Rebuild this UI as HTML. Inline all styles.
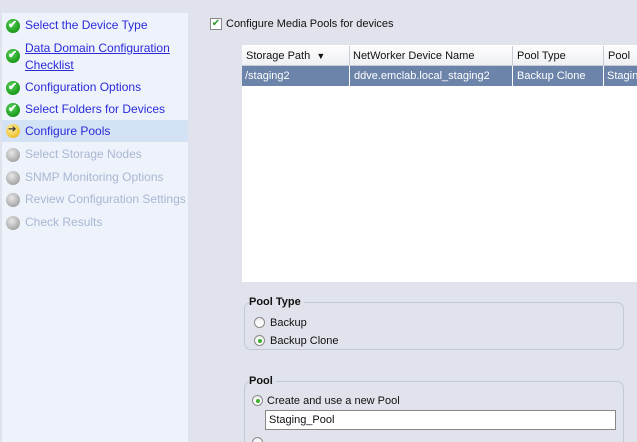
<!DOCTYPE html>
<html><head><meta charset="utf-8"><style>
*{margin:0;padding:0;box-sizing:border-box}
html,body{width:637px;height:442px;overflow:hidden}
body{background:#e0e3eb;font-family:"Liberation Sans",Arial,sans-serif;position:relative}
.left{position:absolute;left:2px;top:13px;width:186px;height:429px;background:#eef3fb}
.step{position:absolute;left:0;width:186px;font-size:12px;color:#2a2ad8;padding-left:23px;line-height:17px;white-space:nowrap}
.step.dis{color:#a9b7d3}
.step.cur{background:#d4e2f5}
.ic{position:absolute;left:4px;width:14px;height:14px;border-radius:50%}
.ok{background:radial-gradient(circle at 40% 35%,#5ad25a,#1a9a1a 70%,#0d6d0d);}
.ok:after{content:"✔";position:absolute;left:2px;top:-2px;color:#fff;font-size:11px;font-weight:bold}
.cu{background:radial-gradient(circle at 40% 35%,#fff3a0,#f0c030 70%,#b88a10);}
.cu:after{content:"➔";position:absolute;left:2px;top:-1px;color:#333;font-size:10px;line-height:14px}
.gr{background:radial-gradient(circle at 40% 35%,#e8e8e8,#a8a8a8 70%,#777);}
.t{position:absolute;font-size:11px;color:#111;white-space:nowrap}
.tbl{position:absolute;left:242px;top:45px;width:395px;height:237px;background:#fff}
.hd{position:absolute;top:1px;height:20px;background:linear-gradient(#fdfdfd,#eef0f4);border-right:1px solid #c8ccd4;border-bottom:1px solid #c8ccd4;font-size:11px;line-height:20px;padding-left:4px;color:#111;white-space:nowrap;overflow:hidden}
.rw{position:absolute;top:21px;height:20px;background:#6c84aa;border-right:1px solid #fff;color:#fff;font-size:11px;line-height:20px;padding-left:3px;white-space:nowrap;overflow:hidden}
.grp{position:absolute;left:244px;width:380px;border:1px solid #c4c8d2;border-radius:7px}
.lg{position:absolute;font-size:11px;font-weight:bold;background:#e0e3eb;padding-right:3px;color:#111}
.rad{position:absolute;width:11px;height:11px;border-radius:50%;border:1px solid #888;background:linear-gradient(#f0f0f0,#fff)}
.rad.on:after{content:"";position:absolute;left:2.5px;top:2.5px;width:4px;height:4px;border-radius:50%;background:#3cb030}
</style></head><body>
<div class="left">
 <div class="step" style="top:4px"><span class="ic ok" style="top:2px"></span>Select the Device Type</div>
 <div class="step" style="top:27px;text-decoration:underline"><span class="ic ok" style="top:9px"></span>Data Domain Configuration<br>Checklist</div>
 <div class="step" style="top:66px"><span class="ic ok" style="top:2px"></span>Configuration Options</div>
 <div class="step" style="top:88px"><span class="ic ok" style="top:2px"></span>Select Folders for Devices</div>
 <div class="step cur" style="top:107px;height:22px;line-height:22px"><span class="ic cu" style="top:4px"></span>Configure Pools</div>
 <div class="step dis" style="top:133px"><span class="ic gr" style="top:2px"></span>Select Storage Nodes</div>
 <div class="step dis" style="top:156px"><span class="ic gr" style="top:2px"></span>SNMP Monitoring Options</div>
 <div class="step dis" style="top:178px"><span class="ic gr" style="top:2px"></span>Review Configuration Settings</div>
 <div class="step dis" style="top:201px"><span class="ic gr" style="top:2px"></span>Check Results</div>
</div>
<div style="position:absolute;left:210px;top:18px;width:12px;height:12px;border:1px solid #888;background:#fff;color:#2a9a2a;font-size:10px;line-height:10px;text-align:center">✔</div>
<div class="t" style="left:226px;top:18px">Configure Media Pools for devices</div>
<div class="tbl">
 <div class="hd" style="left:0;width:108px">Storage Path&nbsp;&nbsp;<span style="font-size:9px">▼</span></div>
 <div class="hd" style="left:108px;width:163px;padding-left:3px">NetWorker Device Name</div>
 <div class="hd" style="left:271px;width:91px">Pool Type</div>
 <div class="hd" style="left:362px;width:40px;border-right:none">Pool</div>
 <div class="rw" style="left:0;width:108px">/staging2</div>
 <div class="rw" style="left:108px;width:163px;padding-left:4px">ddve.emclab.local_staging2</div>
 <div class="rw" style="left:271px;width:91px;padding-left:4px">Backup Clone</div>
 <div class="rw" style="left:362px;width:40px;padding-left:3px;border-right:none">Staging_Pool</div>
</div>
<div class="grp" style="top:302px;height:48px"></div>
<div class="lg" style="left:249px;top:296px">Pool Type</div>
<div class="rad" style="left:254px;top:317px"></div><div class="t" style="left:270px;top:317px">Backup</div>
<div class="rad on" style="left:254px;top:335px"></div><div class="t" style="left:270px;top:335px">Backup Clone</div>
<div class="grp" style="top:381px;height:70px"></div>
<div class="lg" style="left:249px;top:375px">Pool</div>
<div class="rad on" style="left:252px;top:395px"></div><div class="t" style="left:267px;top:395px">Create and use a new Pool</div>
<div style="position:absolute;left:265px;top:410px;width:351px;height:20px;background:#fff;border:1px solid #888;font-size:11px;line-height:18px;padding-left:3px;color:#111">Staging_Pool</div>
<div class="rad" style="left:252px;top:437px"></div>
</body></html>
